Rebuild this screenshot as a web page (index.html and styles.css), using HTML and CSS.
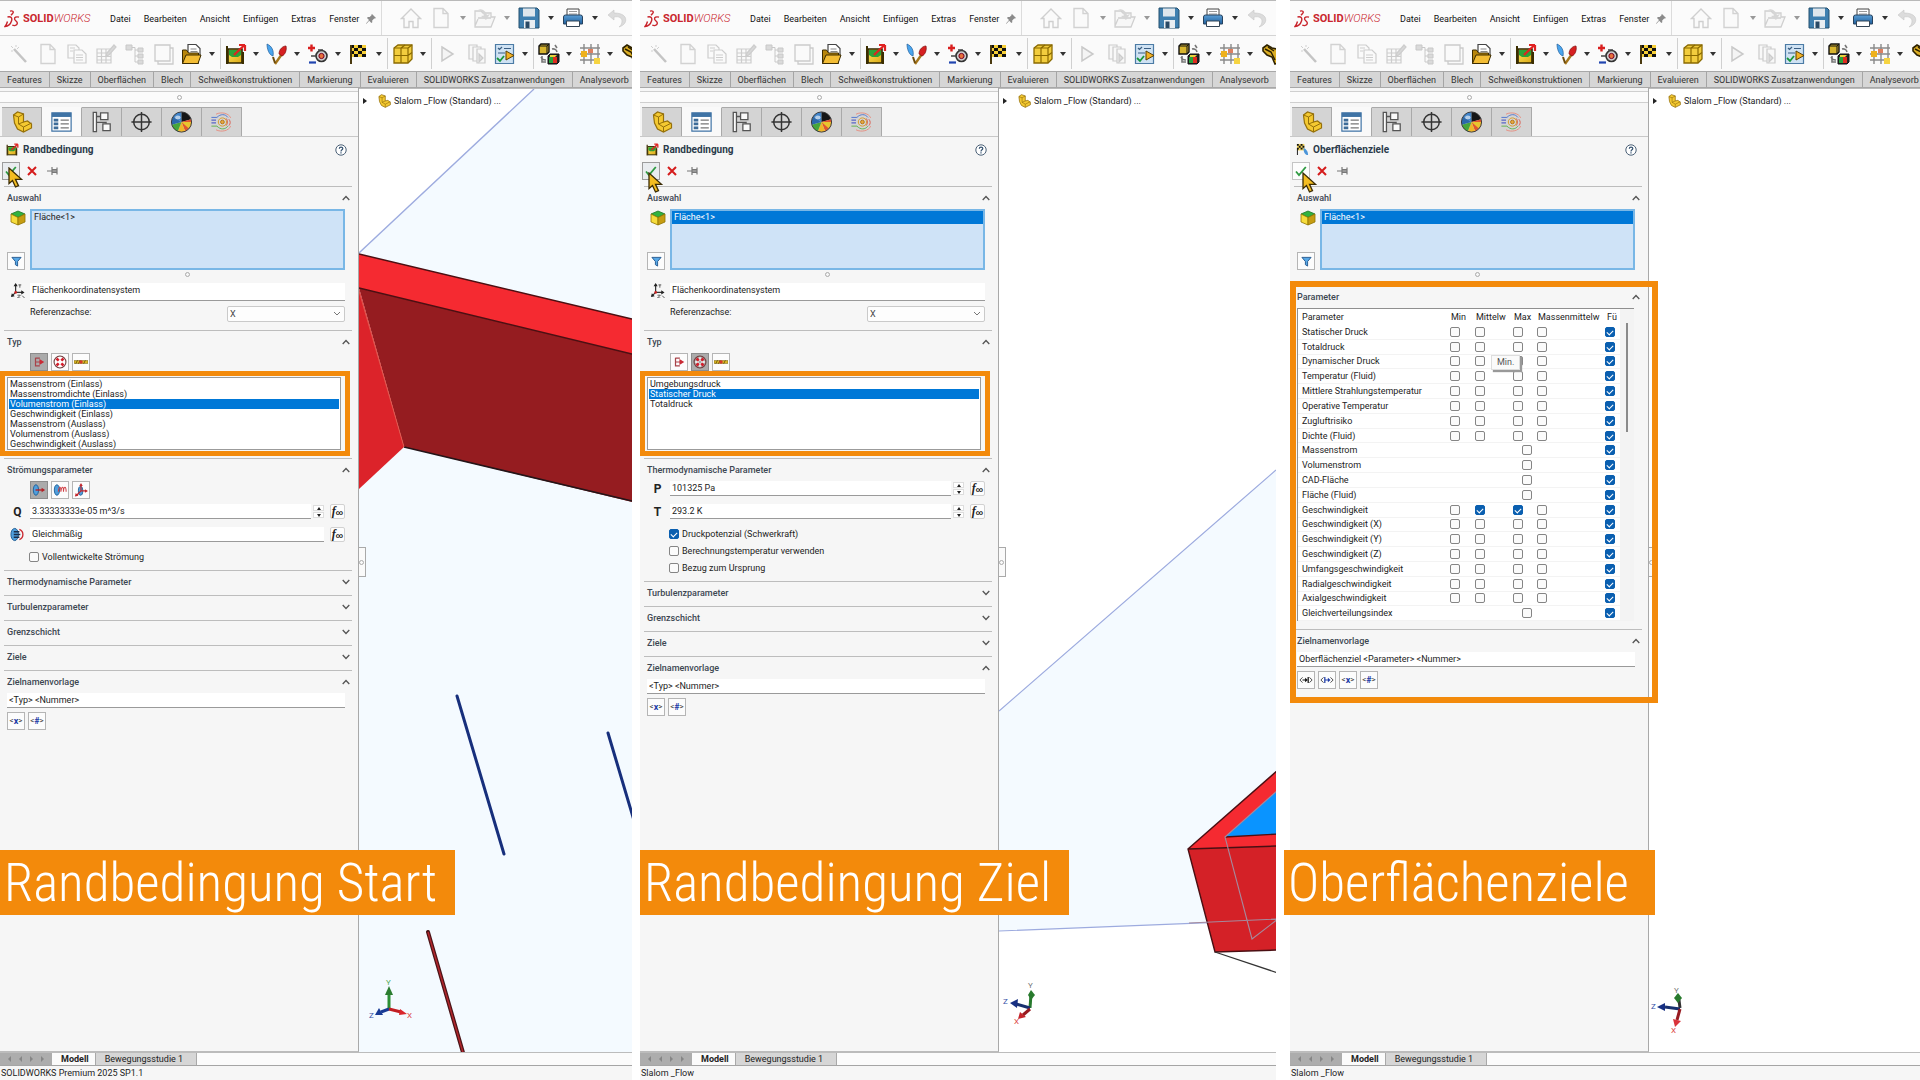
FILE: index.html
```
<!DOCTYPE html>
<html lang="de">
<head>
<meta charset="utf-8">
<title>SOLIDWORKS Flow – Randbedingungen und Ziele</title>
<link rel="stylesheet" href="styles.css">
</head>
<body>

<svg class="sprite" aria-hidden="true">
  <defs>
    <linearGradient id="g-yellow" x1="0" y1="0" x2="1" y2="1"><stop offset="0" stop-color="#ffe45c"/><stop offset="1" stop-color="#dba915"/></linearGradient>
    <linearGradient id="g-blue" x1="0" y1="0" x2="0" y2="1"><stop offset="0" stop-color="#5c9fd6"/><stop offset="1" stop-color="#1f5f9c"/></linearGradient>
  </defs>
  <symbol id="i-ds" viewBox="0 0 16 18"><g fill="none" stroke="#c9252d" stroke-width="1.400"><path d="M6 1.200C8.500 .3 10 1.500 8.800 3.200L7 5.200"/><path d="M3.500 7c3.500-.8 5 .8 4 4S3.800 16.300 1 16.500c1.200-1.500 2-3.200 2.500-5"/><path d="M15 7.200c-2.800-.8-4.800.2-4.400 2s3.200 2.200 2.700 4.300-3 2.500-5 1.700"/></g></symbol>
  <symbol id="i-pin" viewBox="0 0 12 12"><path d="M7 1l4 4-1 .6-.8-.2-2 2 .1 1.900-.9.7-2.200-2.200L1.500 10.800l-.5-.4L4 7 2 5l.8-1 1.900.1 2-2L6.400 1.400z" fill="#8b8b8b"/></symbol>
  <symbol id="i-home" viewBox="0 0 22 22"><path d="M1.500 11.500L11 2l9.500 9.500h-2.500V20.500h-5v-6H9v6H4v-9z" fill="#fafafa" stroke="#cfcfcf" stroke-width="1.400"/></symbol>
  <symbol id="i-doc" viewBox="0 0 22 22"><path d="M4 1.500h9l5 5v14H4zM13 1.500v5h5" fill="#fafafa" stroke="#d2d2d2" stroke-width="1.400"/></symbol>
  <symbol id="i-open" viewBox="0 0 22 22"><path d="M1 19V4h6l2 2h8v4h4l-4 10H1zM4 12l-3 7M4 11h13" fill="#f7f7f7" stroke="#d0d0d0" stroke-width="1.300"/><path d="M4 2c6 0 8 3 9 6l3-1-4 6-5-4 3-.5C9 5 7 3 4 2z" fill="#d6d6d6"/></symbol>
  <symbol id="i-save" viewBox="0 0 22 22"><path d="M1 1h18l2 2v18H1z" fill="#3f7faf" stroke="#24506f"/><path d="M5 1.500h12v8H5z" fill="#dfe6ec"/><path d="M6 13h11v8H6z" fill="#e9eef2"/><path d="M7.500 14.500h4V21h-4z" fill="#2a4a66"/></symbol>
  <symbol id="i-print" viewBox="0 0 22 22"><path d="M5 2h12v8H5z" fill="#fff" stroke="#444"/><path d="M7 4.500h8M7 7h8" stroke="#999"/><path d="M1.500 10q0-2 2-2h15q2 0 2 2v7h-19z" fill="url(#g-blue)" stroke="#27425e"/><path d="M4.500 14h13v5.500h-13z" fill="#fff" stroke="#345"/></symbol>
  <symbol id="i-undo" viewBox="0 0 22 22"><path d="M8 3L2 8l6 5V10c5-1 8 1 8 4s-1 4-3 6c6-2 8-6 6-10-2-3-6-4-11-4z" fill="#dcdcdc" stroke="#c8c8c8" stroke-width=".6"/></symbol>
  <symbol id="i-wand" viewBox="0 0 22 22"><path d="M6 6l12 13" stroke="#c4c4c4" stroke-width="2.500"/><path d="M3 3l2 2M3 8h2M8 2v2M9 6l2-2" stroke="#d0d0d0"/></symbol>
  <symbol id="i-copy" viewBox="0 0 22 22"><g fill="#fafafa" stroke="#cdcdcd" stroke-width="1.200"><path d="M2 2h8l3 3v10H2z"/><path d="M8 7h8l4 4v9H8z"/><path d="M10 12h7M10 14.500h7M10 17h7M4 5h5M4 8h3"/></g></symbol>
  <symbol id="i-edit" viewBox="0 0 22 22"><g fill="#fafafa" stroke="#cdcdcd" stroke-width="1.200"><path d="M2 6h14v14H2zM2 10h14M2 13.500h14M2 17h14M6.500 6v14M11 6v14"/><path d="M12 10l7-8 2 2-7 8-3 1z" fill="#d8d8d8"/></g></symbol>
  <symbol id="i-tree" viewBox="0 0 22 22"><g fill="#dadada" stroke="#c8c8c8"><path d="M2 2h6v5H2zM14 5h5v4h-5zM14 11h5v4h-5zM14 17h5v4h-5z"/><path d="M8 4.500h3V19h3M11 7h3M11 13h3" fill="none"/></g></symbol>
  <symbol id="i-stack" viewBox="0 0 22 22"><g fill="#fafafa" stroke="#cbcbcb" stroke-width="1.300"><path d="M5 5h15v16H5z"/><path d="M2 2h15v16H2z"/></g></symbol>
  <symbol id="i-folder" viewBox="0 0 22 22"><path d="M7 1.500h8l4 4V13H7z" fill="#fff" stroke="#444" stroke-width="1.200"/><path d="M9.500 6h6M9.500 8.500h7" stroke="#888"/><path d="M1.500 20.500V7h4l2 3h10v10.500z" fill="#b8860b" stroke="#3c2c00"/><path d="M1.500 20.500L5 12h15l-3 8.500z" fill="#f3bd35" stroke="#3c2c00"/></symbol>
  <symbol id="i-boundary" viewBox="0 0 22 22"><path d="M3 6h14v14H3z" fill="url(#g-yellow)" stroke="#2e2500" stroke-width="1.600"/><path d="M4 7h12v5l-3 2H7l-3-2z" fill="#2ca237"/><path d="M2 3v18M18 9v12" stroke="#3b2d00" stroke-width="2"/><path d="M9 12L19 2.500M20 2h-6M20 2v6" stroke="#e02222" stroke-width="2.200" fill="none"/></symbol>
  <symbol id="i-brush" viewBox="0 0 22 22"><path d="M1 1c5 2 7 7 6 12C3 12 1 6 1 1z" fill="#4aa5ee" stroke="#1f5d99" stroke-width=".7"/><path d="M9 21l7-10" stroke="#a5761b" stroke-width="2.400"/><path d="M13 11c0-5 4-8 7-8 1 4-1 9-4 10z" fill="#d62020" stroke="#7c0b0b" stroke-width=".7"/><path d="M7 14l2 6" stroke="#6b4a0c" stroke-width="2"/></symbol>
  <symbol id="i-plus" viewBox="0 0 22 22"><path d="M1 5h7M4.500 1.500v7" stroke="#d91f1f" stroke-width="2.400"/><path d="M2 19.500h7" stroke="#2146b0" stroke-width="2.200"/><circle cx="14.500" cy="13" r="5.500" fill="#ccc" stroke="#333" stroke-width="1.600"/><circle cx="14.500" cy="13" r="2.600" fill="#e8713a" stroke="#702"/><path d="M4 13h6M11 7h5" stroke="#444" stroke-width="1.500"/></symbol>
  <symbol id="i-flag" viewBox="0 0 22 22"><path d="M2 2h16v12H2z" fill="#f7cf36"/><path d="M2 2h4v3H2zM10 2h4v3h-4zM6 5h4v3H6zM14 5h4v3h-4zM2 8h4v3H2zM10 8h4v3h-4zM6 11h4v3H6zM14 11h4v3h-4z" fill="#111"/><path d="M3 2v19" stroke="#4a3a10" stroke-width="2"/></symbol>
  <symbol id="i-cube" viewBox="0 0 22 22"><path d="M2 5l4-3h14v14l-4 4H2z" fill="#f2cd3e" stroke="#8a6a00" stroke-width="1.300"/><path d="M2 5h14v15M16 5l4-3M9 5v15M2 12.500h14M13 2L9 5M16 12.500l4-3" fill="none" stroke="#8a6a00" stroke-width="1.200"/></symbol>
  <symbol id="i-play" viewBox="0 0 22 22"><path d="M5 4l11 7-11 7z" fill="#f4f4f4" stroke="#c9c9c9" stroke-width="1.500"/></symbol>
  <symbol id="i-docs" viewBox="0 0 22 22"><g fill="#f8f8f8" stroke="#cbcbcb" stroke-width="1.200"><path d="M3 2h8v14H3z"/><path d="M7 4h8v14H7z"/><path d="M11 6h8v14h-8z"/><path d="M13 11l4 4-4 4z" fill="#ddd"/></g></symbol>
  <symbol id="i-check" viewBox="0 0 22 22"><path d="M1.500 1.500h18v19h-18z" fill="#cfe2f3" stroke="#4c7ba5" stroke-width="1.200"/><path d="M4 5l1.500 1.500L8 4M10 5.500h7M4 10h7" stroke="#3a5e83" fill="none" stroke-width="1.200"/><path d="M3 15l3 3 4-5" stroke="#18963a" stroke-width="1.800" fill="none"/><path d="M12 8l8 4.500-8 4.500z" fill="#f3b224" stroke="#5b3f00"/></symbol>
  <symbol id="i-cubes" viewBox="0 0 22 22"><path d="M1 3l2-2h8v8l-2 2H1z" fill="#d8b52e" stroke="#111" stroke-width="1.400"/><path d="M1 3h8v8M9 3l2-2" fill="none" stroke="#111"/><path d="M10 13l2-2h9v8l-2 2h-9z" fill="#222" stroke="#111"/><path d="M11 14h4v6h-4z" fill="#28a23c"/><path d="M15 14h4v6h-4z" fill="#df2c1e"/><path d="M12 12h7l-2 2h-5z" fill="#e9d23b"/><path d="M14 6a4 4 0 0 1 5 3M8 17a5 5 0 0 1-5-3M4 13v6h4M17 2l2 3" fill="none" stroke="#777" stroke-width="1.600"/></symbol>
  <symbol id="i-grid" viewBox="0 0 22 22"><path d="M5 1v20M12 1v20M19 1v15M1 5h20M1 11h20M1 17h15" stroke="#8a8a8a" stroke-width="1.400"/><path d="M2 8h6v6H2z" fill="#eeb11e"/><path d="M15 15h6v6h-6z" fill="#f6d442"/><path d="M9 6h5v4H9z" fill="#de8060"/></symbol>
  <symbol id="i-tool" viewBox="0 0 22 22"><path d="M2 5l4-3 5 3 9 2v12l-6 2-3-7-5-2-4-4z" fill="#dcae24" stroke="#2c2100" stroke-width="1.600"/><path d="M4 6l6 3 4 8M7 4l6 4" fill="none" stroke="#2c2100" stroke-width="1.400"/></symbol>
  <symbol id="i-part" viewBox="0 0 22 22"><path d="M3 4l4-3 6 2v8l4-1 4 3v4l-8 4-6-3-3-6z" fill="#f4c931" stroke="#95700a" stroke-width="1.200"/><path d="M3 4l5 2 5-3M8 6v7l5 3 8-4M13 16v5M8 13l5-2" fill="none" stroke="#95700a"/></symbol>
  <symbol id="i-props" viewBox="0 0 24 24"><path d="M1.500 2h21v20h-21z" fill="#fff" stroke="#3f73a5" stroke-width="1.300"/><path d="M1.500 2h21v4.500h-21z" fill="#3f73a5"/><path d="M3.500 8.500h5v3h-5zM3.500 12.500h5v3h-5zM3.500 17h5v3h-5z" fill="#3d6c99"/><path d="M11 10h9M11 14h9M11 18.500h9" stroke="#777" stroke-width="1.300"/></symbol>
  <symbol id="i-config" viewBox="0 0 24 24"><g fill="#fafafa" stroke="#555" stroke-width="1.400"><path d="M3 1.500h3.500v21H3z"/><path d="M11 2h8v7.500h-8z"/><path d="M13.500 14h8v7.500h-8z"/><path d="M6.500 6H11M6.500 12.500H17V14" fill="none"/></g></symbol>
  <symbol id="i-cross" viewBox="0 0 24 24"><circle cx="12" cy="12" r="8.500" fill="none" stroke="#333" stroke-width="1.600"/><path d="M12 1v22M1 12h22" stroke="#333" stroke-width="1.600"/></symbol>
  <symbol id="i-ball" viewBox="0 0 24 24"><path d="M12 12L3 6a11 11 0 0 1 9-5z" fill="#3f83c9"/><path d="M12 12V1a11 11 0 0 1 10.500 8z" fill="#161616"/><path d="M12 12l10.500-3A11 11 0 0 1 16 22z" fill="#e2552f"/><path d="M12 12l4 10a11 11 0 0 1-8 .2z" fill="#f0b62a"/><path d="M12 12L8 22.200A11 11 0 0 1 1.500 15z" fill="#46a63a"/><path d="M12 12L1.500 15A11 11 0 0 1 3 6z" fill="#2b69ab"/><path d="M12 12h11a11 11 0 0 1-3 7z" fill="#e8c52e"/><circle cx="12" cy="12" r="11" fill="none" stroke="#333"/><ellipse cx="8" cy="7" rx="3" ry="2" fill="#fff" opacity=".6"/></symbol>
  <symbol id="i-flow" viewBox="0 0 24 24"><g fill="none"><path d="M1 7h6c4-4 9-4 12 0" stroke="#4a72cf"/><path d="M1 10h5M1 13h5" stroke="#5a66c6" stroke-width="1.300"/><path d="M1 16.500h6c4 4 9 4 12 0" stroke="#5bb04c"/><path d="M6 3.500c6-3 14-1 16 4M6 20.500c6 3 14 1 16-4" stroke="#e78c7e"/><path d="M17 8c2 2 2 6 0 8M20 9c2 2 2 5 0 7" stroke="#d85a4e"/><circle cx="13" cy="12" r="4.500" stroke="#d79a21"/><circle cx="13" cy="12" r="2" fill="#e9a93b" stroke="#b06f12"/></g></symbol>
  <symbol id="i-help" viewBox="0 0 12 12"><circle cx="6" cy="6" r="5.200" fill="#fff" stroke="#4a6076"/><path d="M4.300 4.700C4.300 2.500 7.800 2.500 7.800 4.600 7.800 5.900 6 5.800 6 7.400M6 8.300v1.200" fill="none" stroke="#33506e" stroke-width="1.200"/></symbol>
  <symbol id="i-ok" viewBox="0 0 12 12"><path d="M1 6.500l3 3.500L10.800 2" fill="none" stroke="#2e9a41" stroke-width="1.800"/></symbol>
  <symbol id="i-cancel" viewBox="0 0 12 12"><path d="M2 2l8 8M10 2l-8 8" stroke="#d51c1c" stroke-width="2"/></symbol>
  <symbol id="i-tack" viewBox="0 0 12 12"><path d="M0 6h5M5 2v8M5 4.500h5v3H5zM10 2.500v7" fill="#999" stroke="#777" stroke-width="1.200"/></symbol>
  <symbol id="i-face" viewBox="0 0 16 16"><path d="M1 4l7-3 7 3-7 3.500z" fill="#31b23f" stroke="#1d7428" stroke-width=".8"/><path d="M1 4l7 3.500V15L1 12z" fill="#f6dc3c" stroke="#8f7400" stroke-width=".8"/><path d="M15 4L8 7.500V15l7-3z" fill="#c69c12" stroke="#8f7400" stroke-width=".8"/></symbol>
  <symbol id="i-filter" viewBox="0 0 12 12"><path d="M1 1.500h10L7.200 6v5L4.800 9.500V6z" fill="#58a8e6" stroke="#22588f"/></symbol>
  <symbol id="i-axes" viewBox="0 0 16 16"><path d="M6 1v9M6 10h8M6 10l-4 4" stroke="#333" stroke-width="1.300" fill="none"/><path d="M6 0L3.800 3.500h4.400zM15.500 10L12 7.800v4.400zM1 15l1-4 3 3z" fill="#222"/><path d="M9 2h3M10.500 2v3M8 13h3l-3 3h3M13 13.500l2.500 2.500" stroke="#555" fill="none"/><circle cx="6" cy="10" r="1.400" fill="#c22"/></symbol>
  <symbol id="i-inlet" viewBox="0 0 16 16"><path d="M4 3v10M4 3.500h5M4 8h7M4 12.500h5" stroke="#a8434a" stroke-width="1.400" fill="none"/><path d="M8.500 4.500L14 8l-5.500 3.500z" fill="#c92a35"/></symbol>
  <symbol id="i-pressure" viewBox="0 0 16 16"><circle cx="8" cy="8" r="6.800" fill="none" stroke="#6f3d3d" stroke-width="1.200"/><path d="M8 2.500v4M8 9.500v4M2.500 8h4M9.500 8h4" stroke="#fff" stroke-width="1.600"/><path d="M4 4l2.500 2.500M12 4L9.500 6.500M4 12l2.500-2.500M12 12L9.500 9.500" stroke="#d51f2c" stroke-width="3"/></symbol>
  <symbol id="i-wall" viewBox="0 0 16 16"><path d="M0 6.500h16v3H0z" fill="#e9c52c" stroke="#7b6410" stroke-width=".8"/><path d="M2 10l2-4M5 10l2-4M11 10l2-4" stroke="#6b5200"/><circle cx="8" cy="8" r="2" fill="#d5372c"/></symbol>
  <symbol id="i-normal" viewBox="0 0 16 16"><ellipse cx="4.500" cy="8" rx="3" ry="6" fill="#4f9fdd" stroke="#1d5b93"/><path d="M4 8h8" stroke="#b32026" stroke-width="1.600"/><path d="M11 5.500L15 8l-4 2.500z" fill="#b32026"/></symbol>
  <symbol id="i-swirl" viewBox="0 0 16 16"><ellipse cx="4.500" cy="8" rx="3" ry="6" fill="#4f9fdd" stroke="#1d5b93"/><path d="M6 10c1-7 3-7 3 0 1-7 3-7 3 0 0-7 3-7 3 0" stroke="#d04046" fill="none" stroke-width="1.200"/></symbol>
  <symbol id="i-vector" viewBox="0 0 16 16"><ellipse cx="7.500" cy="9" rx="2.500" ry="5" fill="#4f9fdd" stroke="#1d5b93"/><path d="M8 9V2M8 9h6M8 9l-5 5" stroke="#c2272d" stroke-width="1.400"/><path d="M8 0L6 3.500h4zM16 9l-3.500-2v4zM1 15.500l1-4 3 3z" fill="#c2272d"/></symbol>
  <symbol id="i-uniform" viewBox="0 0 16 16"><ellipse cx="5" cy="8" rx="4" ry="6.500" fill="#4f9fdd" stroke="#1d5b93"/><path d="M4 5h6M4 8h7M4 11h6" stroke="#1b2c48" stroke-width="1.500"/><path d="M10 2.500c5 2 5 9 0 11" fill="none" stroke="#c9252d" stroke-width="1.400"/></symbol>
  <symbol id="i-to-edge" viewBox="0 0 16 16"><path d="M4 5L1 8l3 3M12 5l3 3-3 3" fill="none" stroke="#333"/><path d="M4 8h4M10.500 4.500v7" stroke="#111" stroke-width="1.400"/><path d="M7 5.500L10 8l-3 2.500z" fill="#111"/></symbol>
  <symbol id="i-from-edge" viewBox="0 0 16 16"><path d="M4 5L1 8l3 3M12 5l3 3-3 3" fill="none" stroke="#333"/><path d="M5.500 4.500v7M6 8h4" stroke="#1d3ba8" stroke-width="1.400"/><path d="M9 5.500L12 8l-3 2.500z" fill="#1d3ba8"/></symbol>
  <symbol id="i-up" viewBox="0 0 8 6"><path d="M.7 5L4 1.500 7.300 5" fill="none" stroke="#555" stroke-width="1.300"/></symbol>
  <symbol id="i-down" viewBox="0 0 8 6"><path d="M.7 1L4 4.500 7.300 1" fill="none" stroke="#555" stroke-width="1.300"/></symbol>
  <symbol id="i-cursor" viewBox="0 0 16 21"><path d="M1 1v15.500l3.500-3 3 6.500 3-1.400-3-6.300h6z" fill="#f4bd22" stroke="#3b2c05" stroke-width="1.300"/></symbol>
  <symbol id="i-goals" viewBox="0 0 14 14"><path d="M1 1h8v7H1z" fill="#f0d35a"/><path d="M1 1h2v2H1zM5 1h2v2H5zM3 3h2v2H3zM7 3h2v2H7zM1 5h2v2H1zM5 5h2v2H5zM1 7v6h1V7z" fill="#111"/><path d="M8 5c4 2 5 5 5 8-3 0-5-3-5-8z" fill="#4b95d8"/></symbol>
</svg>

<template id="chrome-top">
  <header class="titlebar">
    <div class="brand-menu">
      <svg class="ds"><use href="#i-ds"/></svg>
      <span class="brand"><b>SOLID</b><i>WORKS</i></span>
      <nav class="menu"><a href="#">Datei</a><a href="#">Bearbeiten</a><a href="#">Ansicht</a><a href="#">Einfügen</a><a href="#">Extras</a><a href="#">Fenster</a></nav>
      <svg class="menu-pin"><use href="#i-pin"/></svg>
    </div>
    <div class="quick" data-icons="home doc+ open+ save+ print+ undo"></div>
  </header>
  <div class="toolbar" data-icons="wand doc copy edit tree stack folder+ | boundary+ brush+ plus+ flag+ | cube+ | play docs check+ | cubes+ grid+ tool"></div>
  <nav class="ribbon"><a href="#">Features</a><a href="#">Skizze</a><a href="#">Oberflächen</a><a href="#">Blech</a><a href="#">Schweißkonstruktionen</a><a href="#">Markierung</a><a href="#">Evaluieren</a><a href="#">SOLIDWORKS Zusatzanwendungen</a><a href="#">Analysevorb</a></nav>
</template>

<template id="panel-tabs">
  <div class="grip-row"><span class="grip"></span></div>
  <div class="tabs">
    <button type="button" aria-label="Feature-Baum"><svg><use href="#i-part"/></svg></button>
    <button type="button" class="active" aria-label="Eigenschaften"><svg><use href="#i-props"/></svg></button>
    <button type="button" aria-label="Konfigurationen"><svg><use href="#i-config"/></svg></button>
    <button type="button" aria-label="Bemaßung"><svg><use href="#i-cross"/></svg></button>
    <button type="button" aria-label="Darstellung"><svg><use href="#i-ball"/></svg></button>
    <button type="button" aria-label="Flow Simulation"><svg><use href="#i-flow"/></svg></button>
  </div>
</template>

<template id="tree-label">
  <div class="tree-label"><span class="expander"></span><svg><use href="#i-part"/></svg><span>Slalom _Flow (Standard) ...</span></div>
</template>

<template id="doc-tabs">
  <div class="doc-tabs">
    <div class="scrollers"><span class="to-left"></span><span class="to-left"></span><span class="to-right"></span><span class="to-right"></span></div>
    <a href="#" class="current">Modell</a><a href="#">Bewegungsstudie 1</a>
  </div>
</template>

<main class="stage">

  <!-- Randbedingung Start -->
  <section class="window">
    <div data-template="chrome-top"></div>
    <div class="workspace">
      <aside class="panel">
        <div data-template="panel-tabs"></div>
        <div class="feature-title"><svg><use href="#i-boundary"/></svg><h2>Randbedingung</h2><svg class="help"><use href="#i-help"/></svg></div>
        <div class="confirm">
          <button type="button" class="ok hover" aria-label="OK"><svg><use href="#i-ok"/></svg></button>
          <button type="button" aria-label="Abbrechen"><svg><use href="#i-cancel"/></svg></button>
          <button type="button" aria-label="Anheften"><svg><use href="#i-tack"/></svg></button>
          <svg class="cursor cursor-start"><use href="#i-cursor"/></svg>
        </div>
        <section class="group">
          <h3>Auswahl <svg><use href="#i-up"/></svg></h3>
          <div class="selection">
            <div class="side"><svg><use href="#i-face"/></svg><button type="button" class="tool" aria-label="Filter"><svg><use href="#i-filter"/></svg></button></div>
            <ul class="picked"><li>Fläche&lt;1&gt;</li></ul>
          </div>
          <div class="grip-row small"><span class="grip"></span></div>
          <div class="field coord"><svg><use href="#i-axes"/></svg><input type="text" value="Flächenkoordinatensystem" aria-label="Koordinatensystem"></div>
          <div class="field axis"><label for="axis-1">Referenzachse:</label><select id="axis-1"><option>X</option></select></div>
        </section>
        <section class="group">
          <h3>Typ <svg><use href="#i-up"/></svg></h3>
          <div class="tools indent"><button type="button" class="tool pressed" aria-label="Strömung"><svg><use href="#i-inlet"/></svg></button><button type="button" class="tool" aria-label="Druck"><svg><use href="#i-pressure"/></svg></button><button type="button" class="tool" aria-label="Wand"><svg><use href="#i-wall"/></svg></button></div>
          <div class="highlight type-list">
            <ul><li>Massenstrom (Einlass)</li><li>Massenstromdichte (Einlass)</li><li class="selected">Volumenstrom (Einlass)</li><li>Geschwindigkeit (Einlass)</li><li>Massenstrom (Auslass)</li><li>Volumenstrom (Auslass)</li><li>Geschwindigkeit (Auslass)</li></ul>
          </div>
        </section>
        <section class="group">
          <h3>Strömungsparameter <svg><use href="#i-up"/></svg></h3>
          <div class="tools indent spaced"><button type="button" class="tool pressed" aria-label="Normal"><svg><use href="#i-normal"/></svg></button><button type="button" class="tool" aria-label="Drall"><svg><use href="#i-swirl"/></svg></button><button type="button" class="tool" aria-label="3D-Vektor"><svg><use href="#i-vector"/></svg></button></div>
          <div class="field"><label class="letter" for="flow-q">Q</label><input id="flow-q" type="text" value="3.33333333e-05 m^3/s"><span class="spin"><i></i><i></i></span><button type="button" class="fx"><i>f</i>∞</button></div>
          <div class="field"><svg><use href="#i-uniform"/></svg><input type="text" value="Gleichmäßig" aria-label="Profil"><button type="button" class="fx"><i>f</i>∞</button></div>
          <div class="checks"><label><input type="checkbox">Vollentwickelte Strömung</label></div>
        </section>
        <section class="group closed"><h3>Thermodynamische Parameter <svg><use href="#i-down"/></svg></h3></section>
        <section class="group closed"><h3>Turbulenzparameter <svg><use href="#i-down"/></svg></h3></section>
        <section class="group closed"><h3>Grenzschicht <svg><use href="#i-down"/></svg></h3></section>
        <section class="group closed"><h3>Ziele <svg><use href="#i-down"/></svg></h3></section>
        <section class="group naming">
          <h3>Zielnamenvorlage <svg><use href="#i-up"/></svg></h3>
          <input type="text" value="&lt;Typ&gt; &lt;Nummer&gt;" aria-label="Zielnamenvorlage">
          <div class="tools"><button type="button" class="tool token">&lt;<b>x</b>&gt;</button><button type="button" class="tool token">&lt;<b>#</b>&gt;</button></div>
        </section>
      </aside>
      <div class="viewport tinted">
        <svg class="scene" aria-hidden="true">
          <path d="M0 0H175L0 164z" fill="#fff"/>
          <path d="M0 164L175 0" stroke="#9dabdf" stroke-width="1.300"/>
          <path d="M0 165l273 65v35L0 199z" fill="#f52a31"/>
          <path d="M0 199l273 66v148L45 358z" fill="#951c20"/>
          <path d="M0 199l45 159L0 400z" fill="#dc232a"/>
          <path d="M0 165l273 65M0 199l273 66" stroke="#4c0f12" stroke-width="1.500"/>
          <path d="M45 358l228 54" stroke="#241418" stroke-width="1.500"/>
          <path d="M0 202l45 156" stroke="#e0584f"/>
          <path d="M98 607l47 158M249 644l47 158" stroke="#172f7c" stroke-width="3" stroke-linecap="round"/>
          <path d="M69 843l36 124" stroke="#4a1418" stroke-width="4" stroke-linecap="round"/>
          <path d="M69 843l36 124" stroke="#b3262c" stroke-width="1.500"/>
          <g class="triad">
            <path d="M30 920V902" stroke="#2d8f35" stroke-width="3"/><path d="M30 897l-4 9h8z" fill="#2b7c2f"/>
            <path d="M30 920l-8 3" stroke="#173a95" stroke-width="3"/><path d="M16 926l4-7 4 7z" fill="#173a95"/>
            <path d="M30 920l12 3" stroke="#c11d22" stroke-width="3"/><path d="M48 925l-7-5-1 6z" fill="#d9262b"/>
            <text x="27" y="896" fill="#58ac5c">Y</text><text x="10" y="929" fill="#3450a6">Z</text><text x="48" y="929" fill="#dc3b40">X</text>
          </g>
        </svg>
        <div data-template="tree-label"></div>
        <span class="splitter"><span class="grip"></span></span>
      </div>
    </div>
    <div data-template="doc-tabs"></div>
    <footer class="status">SOLIDWORKS Premium 2025 SP1.1</footer>
    <h1 class="caption">Randbedingung Start</h1>
  </section>

  <!-- Randbedingung Ziel -->
  <section class="window">
    <div data-template="chrome-top"></div>
    <div class="workspace">
      <aside class="panel">
        <div data-template="panel-tabs"></div>
        <div class="feature-title"><svg><use href="#i-boundary"/></svg><h2>Randbedingung</h2><svg class="help"><use href="#i-help"/></svg></div>
        <div class="confirm">
          <button type="button" class="ok hover" aria-label="OK"><svg><use href="#i-ok"/></svg></button>
          <button type="button" aria-label="Abbrechen"><svg><use href="#i-cancel"/></svg></button>
          <button type="button" aria-label="Anheften"><svg><use href="#i-tack"/></svg></button>
          <svg class="cursor"><use href="#i-cursor"/></svg>
        </div>
        <section class="group">
          <h3>Auswahl <svg><use href="#i-up"/></svg></h3>
          <div class="selection">
            <div class="side"><svg><use href="#i-face"/></svg><button type="button" class="tool" aria-label="Filter"><svg><use href="#i-filter"/></svg></button></div>
            <ul class="picked"><li class="selected">Fläche&lt;1&gt;</li></ul>
          </div>
          <div class="grip-row small"><span class="grip"></span></div>
          <div class="field coord"><svg><use href="#i-axes"/></svg><input type="text" value="Flächenkoordinatensystem" aria-label="Koordinatensystem"></div>
          <div class="field axis"><label for="axis-2">Referenzachse:</label><select id="axis-2"><option>X</option></select></div>
        </section>
        <section class="group">
          <h3>Typ <svg><use href="#i-up"/></svg></h3>
          <div class="tools indent"><button type="button" class="tool" aria-label="Strömung"><svg><use href="#i-inlet"/></svg></button><button type="button" class="tool pressed" aria-label="Druck"><svg><use href="#i-pressure"/></svg></button><button type="button" class="tool" aria-label="Wand"><svg><use href="#i-wall"/></svg></button></div>
          <div class="highlight type-list">
            <ul><li>Umgebungsdruck</li><li class="selected">Statischer Druck</li><li>Totaldruck</li></ul>
          </div>
        </section>
        <section class="group">
          <h3>Thermodynamische Parameter <svg><use href="#i-up"/></svg></h3>
          <div class="field"><label class="letter" for="thermo-p">P</label><input id="thermo-p" type="text" value="101325 Pa"><span class="spin"><i></i><i></i></span><button type="button" class="fx"><i>f</i>∞</button></div>
          <div class="field"><label class="letter" for="thermo-t">T</label><input id="thermo-t" type="text" value="293.2 K"><span class="spin"><i></i><i></i></span><button type="button" class="fx"><i>f</i>∞</button></div>
          <div class="checks">
            <label><input type="checkbox" checked>Druckpotenzial (Schwerkraft)</label>
            <label><input type="checkbox">Berechnungstemperatur verwenden</label>
            <label><input type="checkbox">Bezug zum Ursprung</label>
          </div>
        </section>
        <section class="group closed"><h3>Turbulenzparameter <svg><use href="#i-down"/></svg></h3></section>
        <section class="group closed"><h3>Grenzschicht <svg><use href="#i-down"/></svg></h3></section>
        <section class="group closed"><h3>Ziele <svg><use href="#i-down"/></svg></h3></section>
        <section class="group naming">
          <h3>Zielnamenvorlage <svg><use href="#i-up"/></svg></h3>
          <input type="text" value="&lt;Typ&gt; &lt;Nummer&gt;" aria-label="Zielnamenvorlage">
          <div class="tools"><button type="button" class="tool token">&lt;<b>x</b>&gt;</button><button type="button" class="tool token">&lt;<b>#</b>&gt;</button></div>
        </section>
      </aside>
      <div class="viewport">
        <svg class="scene" aria-hidden="true">
          <path d="M0 622L277 381V831L0 842z" fill="#f4faff"/>
          <path d="M0 622L277 381M0 842l277-11" stroke="#9dabdf" stroke-width="1.200" fill="none"/>
          <path d="M189 760l90-79v76z" fill="#f52a31"/>
          <path d="M189 760l90-3v104l-63 2z" fill="#d42127"/>
          <path d="M226 748l53-47v44z" fill="#0a94ff"/>
          <path d="M279 681l-90 79 27 103 63-2M189 760l90-3M226 748l53-3" fill="none" stroke="#4a0f13" stroke-width="1.400"/>
          <path d="M279 701l-53 47 27 102 26-20M190 834l89-4" fill="none" stroke="#a58a9d" stroke-width="1.100"/>
          <path d="M216 863l63 21" stroke="#333" stroke-width="1.300"/>
          <g class="triad">
            <path d="M31 919l1-14" stroke="#287a2d" stroke-width="3"/><path d="M32 901l-3 5 3 5 4-5z" fill="#287a2d"/>
            <path d="M31 919l-14-4" stroke="#18306f" stroke-width="3"/><path d="M11 914l8-4-1 9z" fill="#173083"/>
            <path d="M31 920l-7 6" stroke="#971a20" stroke-width="3"/><path d="M19 930l2-7 6 5z" fill="#c4242a"/>
            <text x="29" y="899" fill="#777">Y</text><text x="4" y="915" fill="#3450a6">Z</text><text x="15" y="935" fill="#dc3b40">X</text>
          </g>
        </svg>
        <div data-template="tree-label"></div>
        <span class="splitter"><span class="grip"></span></span>
      </div>
    </div>
    <div data-template="doc-tabs"></div>
    <footer class="status">Slalom _Flow</footer>
    <h1 class="caption">Randbedingung Ziel</h1>
  </section>

  <!-- Oberflächenziele -->
  <section class="window goals">
    <div data-template="chrome-top"></div>
    <div class="workspace">
      <aside class="panel">
        <div data-template="panel-tabs"></div>
        <div class="feature-title"><svg><use href="#i-goals"/></svg><h2>Oberflächenziele</h2><svg class="help"><use href="#i-help"/></svg></div>
        <div class="confirm">
          <button type="button" class="ok" aria-label="OK"><svg><use href="#i-ok"/></svg></button>
          <button type="button" aria-label="Abbrechen"><svg><use href="#i-cancel"/></svg></button>
          <button type="button" aria-label="Anheften"><svg><use href="#i-tack"/></svg></button>
          <svg class="cursor cursor-goals"><use href="#i-cursor"/></svg>
        </div>
        <section class="group">
          <h3>Auswahl <svg><use href="#i-up"/></svg></h3>
          <div class="selection">
            <div class="side"><svg><use href="#i-face"/></svg><button type="button" class="tool" aria-label="Filter"><svg><use href="#i-filter"/></svg></button></div>
            <ul class="picked"><li class="selected">Fläche&lt;1&gt;</li></ul>
          </div>
          <div class="grip-row small"><span class="grip"></span></div>
        </section>
        <div class="highlight goal-area">
          <section class="group">
            <h3>Parameter <svg><use href="#i-up"/></svg></h3>
            <div class="goal-box">
              <table>
                <colgroup><col class="c-name"><col class="c-min"><col class="c-avg"><col class="c-max"><col class="c-mass"><col class="c-use"></colgroup>
                <thead><tr><th>Parameter</th><th>Min</th><th>Mittelw</th><th>Max</th><th>Massenmittelw</th><th>Fü</th></tr></thead>
                <tbody id="goal-rows"></tbody>
              </table>
              <span class="scroll-thumb"></span>
              <span class="tooltip">Min.</span>
            </div>
          </section>
          <section class="group naming">
            <h3>Zielnamenvorlage <svg><use href="#i-up"/></svg></h3>
            <input type="text" value="Oberflächenziel &lt;Parameter&gt; &lt;Nummer&gt;" aria-label="Zielnamenvorlage">
            <div class="tools"><button type="button" class="tool" aria-label="Bis Rand"><svg><use href="#i-to-edge"/></svg></button><button type="button" class="tool" aria-label="Ab Rand"><svg><use href="#i-from-edge"/></svg></button><button type="button" class="tool token">&lt;<b>x</b>&gt;</button><button type="button" class="tool token">&lt;<b>#</b>&gt;</button></div>
          </section>
        </div>
      </aside>
      <div class="viewport">
        <svg class="scene" aria-hidden="true">
          <g class="triad">
            <path d="M31 919l-1-8" stroke="#333" stroke-width="3"/><path d="M29 904l-4 5 4 5 4-5z" fill="#287a2d"/>
            <path d="M31 920l-15-2" stroke="#18306f" stroke-width="3"/><path d="M8 918l8-4v8z" fill="#173083"/>
            <path d="M31 920l-3 11" stroke="#971a20" stroke-width="3"/><path d="M26 938l-2-8 8 2z" fill="#d9333a"/>
            <text x="25" y="904" fill="#777">Y</text><text x="2" y="920" fill="#3450a6">Z</text><text x="22" y="944" fill="#dc3b40">X</text>
          </g>
        </svg>
        <div data-template="tree-label"></div>
        <span class="splitter"><span class="grip"></span></span>
      </div>
    </div>
    <div data-template="doc-tabs"></div>
    <footer class="status">Slalom _Flow</footer>
    <h1 class="caption">Oberflächenziele</h1>
  </section>

</main>
<script src="app.js"></script>
</body>
</html>
```
FILE: styles.css
```
:root {
  --accent: #f38a0b;
  --select: #0078d7;
  --line: #bdbdbd;
  --panel: #f6f6f6;
}

* { box-sizing: border-box; }

body {
  margin: 0;
  background: #fff;
  color: #222;
  font: 9px/12px Roboto, "Noto Sans", sans-serif;
}

svg { display: block; flex: none; overflow: hidden; }
a { color: inherit; text-decoration: none; }
ul { list-style: none; margin: 0; padding: 0; }
h1, h2, h3 { margin: 0; font-size: 9px; font-weight: 400; }
button, input, select { font: inherit; color: inherit; margin: 0; padding: 0; border: 0; background: none; }
.sprite { position: absolute; width: 0; height: 0; }

.stage {
  display: grid;
  grid-template-columns: 632fr 636fr 636fr;
  column-gap: 8px;
  height: 100vh;
  min-height: 960px;
}

.window {
  position: relative;
  display: flex;
  flex-direction: column;
  min-width: 0;
}
.window.goals { margin-left: 6px; }

/* Title bar and toolbars */
.titlebar {
  display: flex;
  height: 36px;
  overflow: hidden;
  border-top: 1px solid #b9b9b9;
  border-bottom: 1px solid #d4d4d4;
  background: #fbfbfb;
}
.brand-menu {
  flex: 0 0 382px;
  display: flex;
  align-items: center;
  padding: 2px 4px 0 4px;
  border-right: 1px solid #dcdcdc;
}
.ds { width: 16px; height: 18px; }
.brand { width: 90px; padding-left: 3px; font-size: 11px; color: #c9252d; }
.brand b { font-weight: 700; }
.brand i { font-weight: 300; }
.menu { display: flex; gap: 13px; color: #111; }
.menu-pin { width: 12px; height: 12px; margin-left: auto; }
.quick { display: flex; padding-left: 14px; }
.quick .icon { width: 30px; }
.toolbar {
  display: flex;
  height: 35px;
  overflow: hidden;
  padding-left: 4px;
  background: #fafafa;
}
.icon {
  flex: none;
  display: grid;
  place-items: center;
  width: 29px;
}
.icon svg { width: 22px; height: 22px; }
.toolbar .icon.paired { width: 27px; }
.arrow { flex: none; width: 14px; display: grid; place-items: center; }
.arrow::after { content: ""; border: 3px solid transparent; border-top: 4px solid #333; border-bottom: 0; }
.arrow.dim::after { border-top-color: #999; }
.divider { flex: none; width: 1px; margin: 2px 1px; background: #d0d0d0; }
.ribbon {
  display: flex;
  height: 17px;
  overflow: hidden;
  border-top: 1px solid #a8a8a8;
  border-bottom: 1px solid #a8a8a8;
  background: #d6d6d6;
  color: #333;
}
.ribbon a { flex: none; padding: 2px 7px; border-right: 1px solid #a5a5a5; }
.ribbon a:last-child { flex: 1; padding-right: 0; border: 0; }

/* Property manager panel */
.workspace { flex: 1; display: flex; min-height: 0; }
.panel {
  flex: 0 0 359px;
  position: relative;
  z-index: 2;
  border-right: 1px solid #a9a9a9;
  border-bottom: 1px solid #bcbcbc;
  background: var(--panel);
}
.grip-row {
  display: grid;
  place-items: center;
  height: 12px;
  margin-top: 3px;
  border-top: 1px solid #cfcfcf;
  border-bottom: 1px solid #cfcfcf;
  background: #fbfbfb;
}
.grip-row.small { height: 6px; margin: 1px 0 0 19px; border: 0; background: none; }
.grip { width: 5px; height: 5px; border: 1px solid #aaa; border-radius: 50%; }
.tabs {
  display: flex;
  margin-top: 4px;
  padding-left: 2px;
  border-bottom: 1px solid #c8c8c8;
}
.tabs button {
  width: 40px;
  height: 29px;
  display: grid;
  place-items: center;
  border: solid #a9a9a9;
  border-width: 1px 1px 0 0;
  background: #d4d4d4;
}
.tabs button.active { background: #f9f9f9; border-top-color: #f9f9f9; }
.tabs svg { width: 23px; height: 22px; }

.feature-title { display: flex; align-items: center; height: 25px; padding: 0 11px 0 6px; gap: 4px; }
.feature-title svg { width: 13px; height: 13px; }
.feature-title h2 { font-size: 10px; font-weight: 700; color: #2b3b4b; }
.feature-title .help { width: 12px; height: 12px; margin-left: auto; }
.confirm { position: relative; display: flex; height: 24px; padding-left: 2px; gap: 3px; }
.confirm button { width: 18px; height: 18px; display: grid; place-items: center; }
.confirm .ok { border: 1px solid #c5c5c5; background: #fdfdfd; }
.confirm .ok.hover { background: #e9ecef; border-color: #9c9c9c; }
.confirm button svg { width: 12px; height: 12px; }
.cursor { position: absolute; left: 8px; top: 10px; width: 16px; height: 21px; z-index: 3; }
.cursor-start { top: 5px; }
.cursor-goals { left: 12px; }

.group { margin: 0 6px 0 4px; border-top: 1px solid var(--line); padding-bottom: 8px; }
.group h3 {
  display: flex;
  align-items: center;
  justify-content: space-between;
  height: 22px;
  padding: 0 2px 0 3px;
  font-weight: 500;
  color: #3d4752;
}
.group h3 svg { width: 8px; height: 6px; }
.group.closed { padding-bottom: 2px; }

.selection { display: flex; height: 61px; padding-right: 7px; }
.side { width: 26px; display: flex; flex-direction: column; justify-content: space-between; padding: 1px 0 0 3px; }
.side > svg { width: 16px; height: 16px; margin-left: 3px; }
.picked { flex: 1; border: 2px solid #79b7e6; background: #cfe3f7; }
.picked li { height: 13px; padding: 0 2px; line-height: 12px; }
.selected { background: var(--select); color: #fff; }

.tool {
  width: 18px;
  height: 18px;
  display: grid;
  place-items: center;
  border: 1px solid #b5b5b5;
  background: #fcfcfc;
}
.tool.pressed { background: #ababab; border-color: #8c8c8c; }
.tool svg { width: 14px; height: 14px; }
.side .tool svg { width: 11px; height: 11px; }
.tools { display: flex; gap: 3px; }
.tools.indent { padding-left: 26px; }
.tools.spaced { margin-bottom: 5px; }
.token { display: flex; align-items: center; justify-content: center; font-size: 8px; color: #333; }
.token b { font-size: 9px; color: #1d3ba8; }

.field { display: flex; align-items: stretch; height: 15px; margin-bottom: 8px; padding-right: 7px; }
.field > svg, .letter { flex: none; width: 15px; height: 15px; margin: 0 5px 0 6px; }
.letter { font-size: 12px; line-height: 16px; font-weight: 700; text-align: center; }
.field input, .naming input {
  flex: 1;
  min-width: 0;
  padding: 0 2px 1px;
  border-bottom: 1px solid #9a9a9a;
  background: #fff;
}
.field.coord { height: 18px; margin: 6px 0 5px; }
.field.coord input { padding-bottom: 3px; }
.axis { height: 16px; margin: 0; justify-content: space-between; padding-left: 26px; }
.axis select {
  width: 118px;
  padding: 0 2px;
  border: 1px solid #cacaca;
  border-radius: 2px;
  appearance: none;
  background: #fdfdfd url("data:image/svg+xml,%3Csvg xmlns='http://www.w3.org/2000/svg' width='8' height='6'%3E%3Cpath d='M1 1l3 3 3-3' fill='none' stroke='%23777'/%3E%3C/svg%3E") no-repeat right 3px center;
  color: #444;
}
.spin { width: 11px; margin: 1px 6px 1px 2px; display: flex; flex-direction: column; gap: 1px; }
.spin i { flex: 1; display: grid; place-items: center; background: #fff; border: 1px solid #ddd; }
.spin i::after { content: ""; border: 2px solid transparent; border-bottom: 3px solid #222; border-top: 0; }
.spin i + i::after { border-top: 3px solid #222; border-bottom: 0; }
.fx { width: 15px; border: 1px solid #d2d2d2; border-radius: 2px; background: #fdfdfd; font-weight: 700; line-height: 12px; font-size: 7px; }
.fx i { font: italic 700 12px/12px "Liberation Serif", serif; }
.field input + .fx { margin-left: 6px; }
.checks { margin-top: -2px; margin-bottom: -3px; padding-left: 25px; }
.checks label { display: flex; align-items: center; gap: 3px; height: 17px; }
input[type="checkbox"] {
  appearance: none;
  flex: none;
  display: block;
  width: 10px;
  height: 10px;
  border: 1px solid #858585;
  border-radius: 2px;
  background: #fbfbfb;
}
input[type="checkbox"]:checked { border-color: #0a5fb0; background: #0a5fb0; }
input[type="checkbox"]:checked::after {
  content: "";
  display: block;
  width: 5px;
  height: 3px;
  margin: 2px 0 0 1px;
  border: solid #fff;
  border-width: 0 0 1px 1px;
  transform: rotate(-45deg);
}

.highlight { position: relative; }
.highlight::after {
  content: "";
  position: absolute;
  border: 5px solid var(--accent);
  pointer-events: none;
}
.type-list { margin: 6px 11px 0 3px; }
.type-list::after { inset: -6px -9px -6px -7px; }
.type-list ul { height: 73px; padding: 1px 1px 0; border: 1px solid #9b9b9b; background: #fff; }
.type-list li { height: 10px; line-height: 10px; padding-left: 1px; }

.naming { padding-bottom: 0; }
.naming input { display: block; width: calc(100% - 10px); height: 15px; margin: 0 0 4px 3px; }
.naming .tools { padding-left: 3px; }

/* Goal table */
.goal-area::after { inset: -4px -10px -14px 0; border-width: 6px; }
.goal-box {
  position: relative;
  height: 313px;
  margin: 0 8px 0 3px;
  overflow: hidden;
  border: solid #8f8f8f;
  border-width: 1px 0 0 1px;
  background: #f3f3f3;
}
.goal-box table { width: 322px; height: 325px; border-collapse: collapse; table-layout: fixed; background: #fff; }
.goal-box th { padding: 0 0 0 4px; font-weight: 400; text-align: left; white-space: nowrap; overflow: hidden; }
.goal-box thead th { height: 16px; }
.goal-box tbody th { border-bottom: 1px solid #f3f3f3; }
.goal-box td { padding: 0 0 0 3px; border-bottom: 1px solid #f3f3f3; }
.goal-box td:last-child { padding-left: 2px; }
.goal-box td[colspan] input { margin: 0 auto; }
.c-name { width: 149px; }
.c-min { width: 25px; }
.c-avg { width: 38px; }
.c-max { width: 24px; }
.c-mass { width: 69px; }
.scroll-thumb { position: absolute; right: 6px; top: 14px; width: 2px; height: 109px; background: #8a8a8a; }
.tooltip {
  position: absolute;
  left: 193px;
  top: 46px;
  padding: 0 5px;
  border: 1px solid #ddd;
  background: #fafafa;
  box-shadow: 2px 2px 1px #999;
  line-height: 13px;
  color: #555;
}

/* Graphics area */
.viewport { flex: 1; position: relative; min-width: 0; background: #fff; border-top: 1px solid #bbb; }
.viewport.tinted { background: #f4faff; }
.scene { position: absolute; inset: 0; width: 100%; height: 100%; }
.triad text { font: 8px Roboto, sans-serif; }
.tree-label { position: relative; display: flex; align-items: center; height: 24px; padding-left: 4px; }
.tree-label svg { width: 14px; height: 14px; margin: 0 3px 0 10px; }
.expander { border: 3px solid transparent; border-left: 4px solid #222; border-right: 0; }
.splitter {
  position: absolute;
  left: -1px;
  top: 458px;
  width: 8px;
  height: 30px;
  display: grid;
  place-items: center;
  border: 1px solid #a9a9a9;
  border-left: 0;
  background: #fafafa;
}

/* Document tabs and status line */
.doc-tabs { display: flex; height: 14px; border-top: 1px solid #bcbcbc; border-bottom: 1px solid #a5a5a5; background: #fbfbfb; }
.scrollers { flex: none; display: flex; width: 52px; justify-content: space-evenly; align-items: center; background: #adadad; }
.scrollers span { border: 3px solid transparent; }
.scrollers .to-left { border-right-color: #868686; border-left-width: 0; }
.scrollers .to-right { border-left-color: #868686; border-right-width: 0; }
.doc-tabs a { padding: 0 13px 0 9px; background: #d6d6d6; border-right: 1px solid #a9a9a9; }
.doc-tabs a.current { padding: 0 6px 0 9px; font-weight: 700; background: #fbfbfb; }
.status { height: 14px; padding-left: 1px; background: #f6f6f6; line-height: 14px; }

.caption {
  position: absolute;
  z-index: 4;
  left: 0;
  bottom: 165px;
  height: 65px;
  padding: 0 18px 0 4px;
  background: var(--accent);
  color: #fff;
  font: 300 53px/66px "Roboto Condensed", Roboto, sans-serif;
  white-space: nowrap;
}
.goals .caption { left: -6px; padding-right: 26px; }
```
FILE: app.js
```
// Shared window parts are cloned from the templates.
document.querySelectorAll("[data-template]").forEach((slot) => {
  const template = document.getElementById(slot.dataset.template);
  slot.replaceWith(template.content.cloneNode(true));
});

// Toolbars: "name" is an icon, "name+" an icon with a drop-down arrow, "|" a divider.
document.querySelectorAll("[data-icons]").forEach((bar) => {
  const html = bar.dataset.icons.split(" ").map((item) => {
    if (item === "|") return '<span class="divider"></span>';
    const paired = item.endsWith("+");
    const name = item.replace("+", "");
    const dim = name === "doc" || name === "open" ? " dim" : "";
    return `<button type="button" class="icon${paired ? " paired" : ""}" aria-label="${name}"><svg><use href="#i-${name}"/></svg></button>` +
      (paired ? `<span class="arrow${dim}"></span>` : "");
  });
  bar.innerHTML = html.join("");
});

// Goal table: "all" has four value columns, "one" a single check box.
const goals = [
  ["Statischer Druck", "all"], ["Totaldruck", "all"], ["Dynamischer Druck", "all"],
  ["Temperatur (Fluid)", "all"], ["Mittlere Strahlungstemperatur", "all"],
  ["Operative Temperatur", "all"], ["Zugluftrisiko", "all"], ["Dichte (Fluid)", "all"],
  ["Massenstrom", "one"], ["Volumenstrom", "one"], ["CAD-Fläche", "one"], ["Fläche (Fluid)", "one"],
  ["Geschwindigkeit", "all", [1, 2]], ["Geschwindigkeit (X)", "all"], ["Geschwindigkeit (Y)", "all"],
  ["Geschwindigkeit (Z)", "all"], ["Umfangsgeschwindigkeit", "all"], ["Radialgeschwindigkeit", "all"],
  ["Axialgeschwindigkeit", "all"], ["Gleichverteilungsindex", "one"], ["", "all"],
];
const box = (label, checked) => `<input type="checkbox" aria-label="${label}"${checked ? " checked" : ""}>`;
const columns = ["Min", "Mittelwert", "Max", "Massenmittelwert"];
document.getElementById("goal-rows").innerHTML = goals.map(([name, kind, on = []]) => {
  const cells = kind === "one"
    ? `<td colspan="4">${box(name)}</td>`
    : columns.map((c, i) => `<td>${box(`${name} ${c}`, on.includes(i))}</td>`).join("");
  return `<tr><th>${name}</th>${cells}<td>${box(`${name} verwenden`, true)}</td></tr>`;
}).join("");
```
